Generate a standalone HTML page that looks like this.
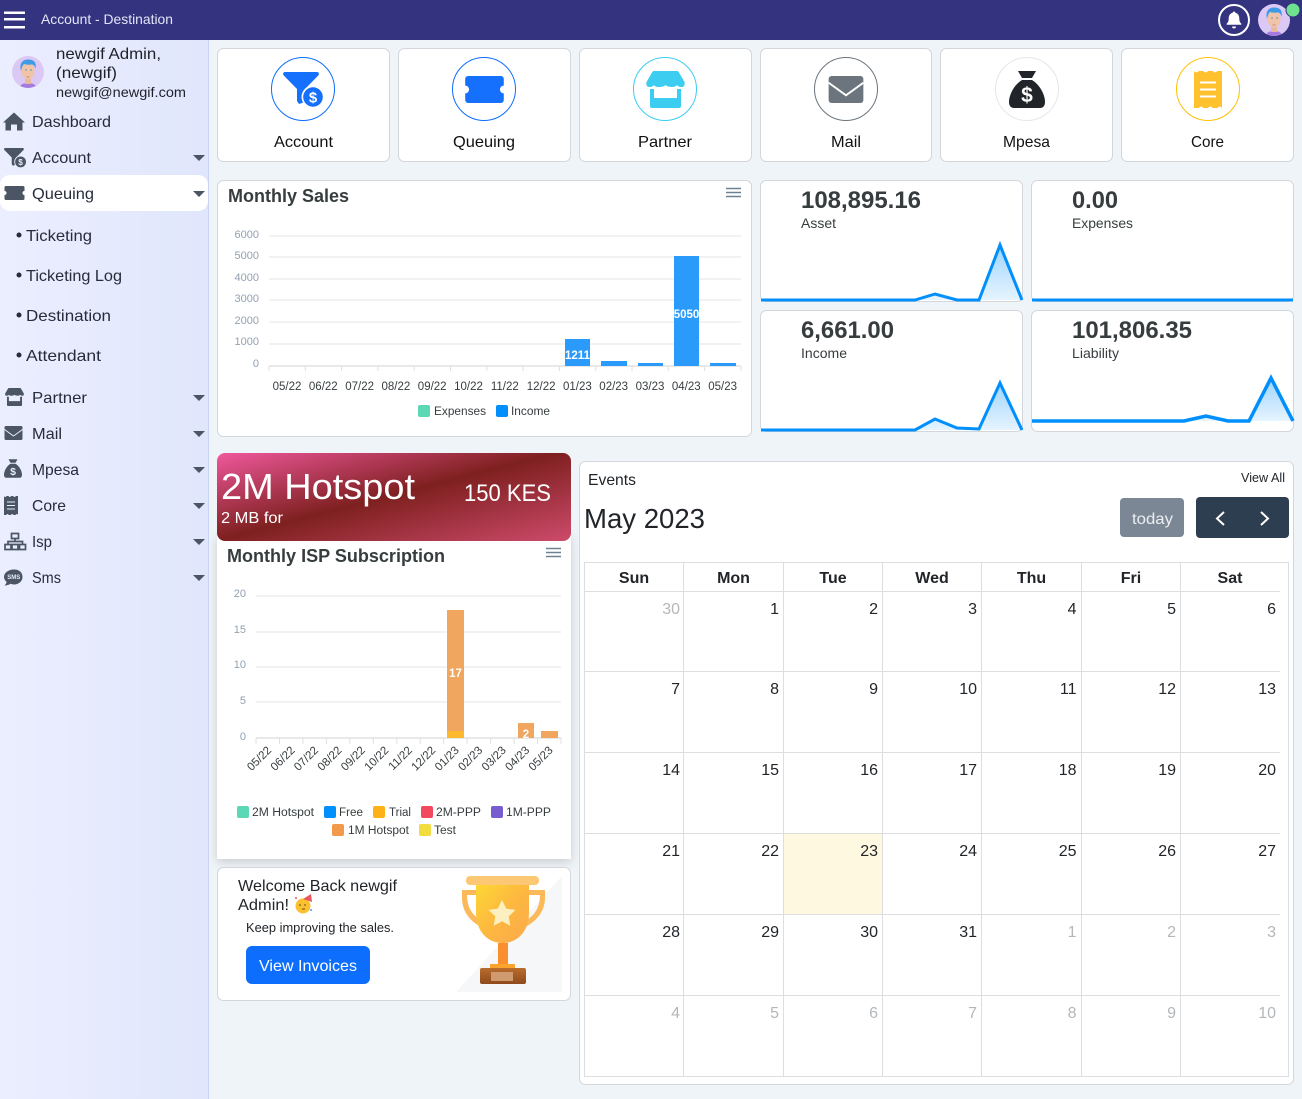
<!DOCTYPE html>
<html><head><meta charset="utf-8"><title>Account - Destination</title>
<style>
html,body{margin:0;padding:0;background:#eff4f8;overflow:hidden}
svg{display:block;font-family:"Liberation Sans",sans-serif}
.s{font-size:16px;fill:#262c3a}
.n{font-size:16px;fill:#212529;text-anchor:end}
.g{font-size:16px;fill:#b4b7ba;text-anchor:end}
.h{font-size:16px;fill:#212529;font-weight:bold;text-anchor:middle}
.x{font-size:11.5px;fill:#373d3f;text-anchor:middle}
.y{font-size:11px;fill:#93a1b0;text-anchor:end}
.r{font-size:11.5px;fill:#373d3f;text-anchor:end}
.l{font-size:11.5px;fill:#373d3f}
.t{font-size:18px;font-weight:bold;fill:#373d3f}
.v{font-size:24px;font-weight:bold;fill:#373d3f}
.c{font-size:14px;fill:#373d3f}
.q{font-size:16px;fill:#111}
.card{fill:#fff;stroke:#d3d6da}
</style></head><body>
<svg width="1302" height="1099" viewBox="0 0 1302 1099" xmlns="http://www.w3.org/2000/svg">
<defs>
<linearGradient id="side" x1="0" y1="0" x2="1" y2="0"><stop offset="0" stop-color="#ebeefe"/><stop offset="1" stop-color="#e0e6fc"/></linearGradient>
<linearGradient id="hot" gradientUnits="userSpaceOnUse" x1="217" y1="453" x2="260" y2="620"><stop offset="0" stop-color="#f0589c"/><stop offset=".49" stop-color="#7e201f"/><stop offset="1" stop-color="#cc4a6a"/></linearGradient>
<linearGradient id="sp" x1="0" y1="0" x2="0" y2="1"><stop offset="0" stop-color="#008ffb" stop-opacity=".38"/><stop offset="1" stop-color="#008ffb" stop-opacity=".1"/></linearGradient>
<linearGradient id="cup" x1="0" y1="0" x2="1" y2="1"><stop offset="0" stop-color="#fdd835"/><stop offset=".5" stop-color="#fdb840"/><stop offset="1" stop-color="#fba94c"/></linearGradient>
<linearGradient id="base" x1="0" y1="0" x2="0" y2="1"><stop offset="0" stop-color="#b96c2e"/><stop offset="1" stop-color="#8f4a1c"/></linearGradient>
<symbol id="funnel" viewBox="0 0 38 36" overflow="visible"><path d="M2 0H34a2 2 0 0 1 1.500 3.300L22 17V30l-6 2-2-3V17L.5 3.300A2 2 0 0 1 2 0z" fill="currentColor"/><circle cx="30" cy="25" r="11.500" fill="var(--bg)"/><circle cx="30" cy="25" r="9.800" fill="currentColor"/><text x="30" y="30.500" font-size="15" font-weight="bold" text-anchor="middle" fill="var(--bg)">$</text></symbol>
<symbol id="ticket" viewBox="0 0 40 28"><path d="M3 0H37a3 3 0 0 1 3 3V10a4 4 0 0 0 0 8V25a3 3 0 0 1-3 3H3a3 3 0 0 1-3-3V18a4 4 0 0 0 0-8V3a3 3 0 0 1 3-3z" fill="currentColor"/></symbol>
<symbol id="store" viewBox="0 0 39 37"><path d="M8 0H31a2 2 0 0 1 1.700 1L38.500 11c.8 2.500-.5 5-2.500 5-2.500 0-4-.5-5-2-1 1.500-3 2-5 2s-5-.5-6.500-2C18 15.500 16 16 13 16s-4-.5-5-2c-1 1.500-2.500 2-5 2-2 0-3.300-2.500-2.500-5L6.300 1A2 2 0 0 1 8 0z" fill="currentColor"/><path d="M4 18h4v9h23v-9h4v17a2 2 0 0 1-2 2H6a2 2 0 0 1-2-2z" fill="currentColor"/></symbol>
<symbol id="mail" viewBox="0 0 36 28"><rect width="36" height="28" rx="3" fill="currentColor"/><path d="M0 7L18 20 36 7" fill="none" stroke="var(--bg)" stroke-width="2"/></symbol>
<symbol id="bag" viewBox="0 0 36 37"><path d="M9 0H27L23 7H13z" fill="currentColor"/><path d="M13 9h10c7 4 13 14 13 22 0 4-2 6-5 6H5c-3 0-5-2-5-6C0 23 6 13 13 9z" fill="currentColor"/><text x="18" y="31" font-size="21" font-weight="bold" text-anchor="middle" fill="var(--bg)">$</text></symbol>
<symbol id="rec" viewBox="0 0 28 37"><path d="M0 0q2.330 3 4.670 0t4.670 0 4.670 0 4.670 0 4.670 0 4.650 0V37q-2.330-3-4.670 0t-4.670 0-4.670 0-4.670 0-4.670 0-4.650 0z" fill="currentColor"/><path d="M6 11.500H22M6 18.500H22M6 25.500H22" stroke="var(--bg)" stroke-width="2"/></symbol>
<symbol id="av" viewBox="0 0 32 32"><clipPath id="avc"><circle cx="16" cy="16" r="16"/></clipPath><g clip-path="url(#avc)"><rect width="32" height="32" fill="#dcc8f4"/><path d="M8 32c0-4 4-5 8-5s8 1 8 5z" fill="#a57be0"/><rect x="13" y="20" width="6" height="8" fill="#e6b9a0"/><ellipse cx="16" cy="15" rx="6.500" ry="8.500" fill="#f0c4a8"/><path d="M9 15C7 7 11 3.500 16 3.500s9 2 7.500 9.500c-.5-3-2-4.500-4-4.500-3 .5-6 0-7.500-.5-1.500 1.500-2.500 4-3 7z" fill="#3e9be6"/><path d="M13 14h2M18 14h2" stroke="#6a8fb0" stroke-width="1"/><path d="M14.500 21h3" stroke="#c98d78" stroke-width="1"/></g></symbol>
</defs>

<rect width="1302" height="1099" fill="#eff4f8"/>

<!-- sidebar -->
<rect x="0" y="40" width="208" height="1059" fill="url(#side)"/>
<rect x="208" y="40" width="1" height="1059" fill="#c9d3f6"/>
<rect x="0" y="175" width="208" height="36" rx="10" fill="#fff"/>
<use href="#av" x="12" y="56" width="32" height="32"/>
<text x="56" y="59" class="s" style="fill:#1d2129" textLength="105" lengthAdjust="spacingAndGlyphs">newgif Admin,</text>
<text x="56" y="78" class="s" style="fill:#1d2129" textLength="61" lengthAdjust="spacingAndGlyphs">(newgif)</text>
<text x="56" y="97" class="s" style="font-size:14px;fill:#1d2129" textLength="130" lengthAdjust="spacingAndGlyphs">newgif@newgif.com</text>

<g style="color:#4b5563;--bg:#e8ecfd">
<path d="M14 112.500L25 122.500H22.500V130.500H17V124.500H11V130.500H5.500V122.500H3z" fill="currentColor"/>
<use href="#funnel" x="4" y="148" width="21" height="20"/>
<use href="#ticket" x="4" y="186" width="21" height="14"/>
<use href="#store" x="5" y="388" width="19" height="18"/>
<use href="#mail" x="4" y="426" width="19" height="14"/>
<use href="#bag" x="4" y="459" width="18" height="19"/>
<use href="#rec" x="4" y="496" width="14" height="19"/>
<path d="M11.500 533.500h7v5h-7zM5 544.500h6v5H5zM12 544.500h6v5h-6zM19.500 544.500h6v5h-6zM15 538.500V541.500M8 544.500V541.500H22.500V544.500" fill="none" stroke="currentColor" stroke-width="1.700"/>
<path d="M14 569.500c6 0 8.500 3.500 8.500 7.500s-3.500 7.500-8.500 7.500c-1.500 0-2.500-.3-3.500-.7-1.500 1.200-3.500 1.700-6 1.700 1.200-1 2-2.300 2-3.700-1.500-1.300-2.500-3-2.500-4.800 0-4 4-7.500 10-7.500z" fill="currentColor"/>
<text x="13.700" y="579" font-size="6" font-weight="bold" text-anchor="middle" fill="#e8ecfd">SMS</text>
<path d="M193 155h12l-6 6zM193 191h12l-6 6zM193 395h12l-6 6zM193 431h12l-6 6zM193 467h12l-6 6zM193 503h12l-6 6zM193 539h12l-6 6zM193 575h12l-6 6z" fill="#4b5563"/>
</g>
<text x="32" y="127" class="s" textLength="79" lengthAdjust="spacingAndGlyphs">Dashboard</text>
<text x="32" y="163" class="s" textLength="59" lengthAdjust="spacingAndGlyphs">Account</text>
<text x="32" y="199" class="s" textLength="62" lengthAdjust="spacingAndGlyphs">Queuing</text>
<circle cx="19" cy="235" r="2.500" fill="#262c3a"/><text x="26" y="241" class="s" textLength="66" lengthAdjust="spacingAndGlyphs">Ticketing</text>
<circle cx="19" cy="275" r="2.500" fill="#262c3a"/><text x="26" y="281" class="s" textLength="96" lengthAdjust="spacingAndGlyphs">Ticketing Log</text>
<circle cx="19" cy="315" r="2.500" fill="#262c3a"/><text x="26" y="321" class="s" textLength="85" lengthAdjust="spacingAndGlyphs">Destination</text>
<circle cx="19" cy="355" r="2.500" fill="#262c3a"/><text x="26" y="361" class="s" textLength="75" lengthAdjust="spacingAndGlyphs">Attendant</text>
<text x="32" y="403" class="s" textLength="55" lengthAdjust="spacingAndGlyphs">Partner</text>
<text x="32" y="439" class="s" textLength="30" lengthAdjust="spacingAndGlyphs">Mail</text>
<text x="32" y="475" class="s" textLength="47" lengthAdjust="spacingAndGlyphs">Mpesa</text>
<text x="32" y="511" class="s" textLength="34" lengthAdjust="spacingAndGlyphs">Core</text>
<text x="32" y="547" class="s" textLength="20" lengthAdjust="spacingAndGlyphs">Isp</text>
<text x="32" y="583" class="s" textLength="29" lengthAdjust="spacingAndGlyphs">Sms</text>

<!-- header -->
<rect width="1302" height="40" fill="#333380"/>
<path d="M4 11.500H25V14H4zM4 18H25V20.500H4zM4 26H25V28.500H4z" fill="#fff"/>
<text x="41" y="24" font-size="14" fill="#e3e6f6" textLength="132" lengthAdjust="spacingAndGlyphs">Account - Destination</text>
<circle cx="1234" cy="20" r="15" fill="none" stroke="#fff" stroke-width="2"/>
<path d="M1234 11.500c.8 0 1.300.5 1.300 1.300 2.700.6 4 2.900 4 5.700 0 3 1 4.200 2 5.200v1h-14.600v-1c1-1 2-2.200 2-5.200 0-2.800 1.300-5.100 4-5.700 0-.8.500-1.300 1.300-1.300zM1232 26.500h4c0 1.300-.9 2-2 2s-2-.7-2-2z" fill="#fff"/>
<use href="#av" x="1258" y="4" width="32" height="32"/>
<circle cx="1293" cy="10" r="7" fill="#6ee28e" stroke="#333380" stroke-width="1"/>

<!-- top cards -->
<g>
<rect class="card" x="217.500" y="48.500" width="172" height="113" rx="6"/>
<rect class="card" x="398.500" y="48.500" width="172" height="113" rx="6"/>
<rect class="card" x="579.500" y="48.500" width="172" height="113" rx="6"/>
<rect class="card" x="760.500" y="48.500" width="171" height="113" rx="6"/>
<rect class="card" x="940.500" y="48.500" width="172" height="113" rx="6"/>
<rect class="card" x="1121.500" y="48.500" width="172" height="113" rx="6"/>
</g>
<g fill="#fff" stroke-width="1">
<circle cx="303" cy="89" r="31.500" stroke="#0d6efd"/>
<circle cx="484" cy="89" r="31.500" stroke="#0d6efd"/>
<circle cx="665" cy="89" r="31.500" stroke="#3ccdf0"/>
<circle cx="846" cy="89" r="31.500" stroke="#6c757d"/>
<circle cx="1027" cy="89" r="31.500" stroke="#e4e6e8"/>
<circle cx="1208" cy="89" r="31.500" stroke="#ffc107"/>
</g>
<g style="--bg:#fff">
<use href="#funnel" x="283" y="72" width="38" height="36" style="color:#1570fd"/>
<use href="#ticket" x="464" y="76" width="41" height="27" style="color:#1570fd"/>
<use href="#store" x="646" y="71" width="39" height="37" style="color:#3ccdf0"/>
<use href="#mail" x="828" y="76" width="36" height="27" style="color:#6c757d"/>
<use href="#bag" x="1009" y="71" width="36" height="37" style="color:#212529"/>
<use href="#rec" x="1194" y="71" width="28" height="37" style="color:#ffc12e"/>
</g>
<text x="274" y="147" class="q" textLength="59" lengthAdjust="spacingAndGlyphs">Account</text>
<text x="453" y="147" class="q" textLength="62" lengthAdjust="spacingAndGlyphs">Queuing</text>
<text x="638" y="147" class="q" textLength="54" lengthAdjust="spacingAndGlyphs">Partner</text>
<text x="831" y="147" class="q" textLength="30" lengthAdjust="spacingAndGlyphs">Mail</text>
<text x="1003" y="147" class="q" textLength="47" lengthAdjust="spacingAndGlyphs">Mpesa</text>
<text x="1191" y="147" class="q" textLength="33" lengthAdjust="spacingAndGlyphs">Core</text>

<!-- Monthly sales -->
<rect class="card" x="217.500" y="180.500" width="534" height="256" rx="6"/>
<text x="228" y="202" class="t" textLength="121" lengthAdjust="spacingAndGlyphs">Monthly Sales</text>
<path d="M726 188.500H741M726 192.500H741M726 196.500H741" stroke="#6e8192" stroke-width="1.500"/>
<path d="M269 236H741M269 257H741M269 279H741M269 300H741M269 322H741M269 344H741" stroke="#e6e6e6" stroke-width="1"/>
<path d="M269 366H741" stroke="#e0e0e0" stroke-width="1.500"/>
<path d="M269 366v5M305.300 366v5M341.600 366v5M377.900 366v5M414.200 366v5M450.500 366v5M486.800 366v5M523.100 366v5M559.400 366v5M595.700 366v5M632 366v5M668.300 366v5M704.600 366v5M741 366v5" stroke="#e0e0e0"/>
<g fill="#2a9bfb">
<rect x="565" y="339" width="25" height="27"/>
<rect x="601" y="361" width="26" height="5"/>
<rect x="638" y="363" width="25" height="3"/>
<rect x="674" y="256" width="25" height="110"/>
<rect x="710" y="363" width="26" height="3"/>
</g>
<text x="577.500" y="359" font-size="11.500" font-weight="bold" fill="#fff" text-anchor="middle">1211</text>
<text x="686.500" y="318" font-size="11.500" font-weight="bold" fill="#fff" text-anchor="middle">5050</text>
<text x="259" y="238" class="y">6000</text><text x="259" y="259" class="y">5000</text><text x="259" y="281" class="y">4000</text><text x="259" y="302" class="y">3000</text><text x="259" y="324" class="y">2000</text><text x="259" y="345" class="y">1000</text><text x="259" y="367" class="y">0</text>
<text x="287" y="390" class="x">05/22</text><text x="323.300" y="390" class="x">06/22</text><text x="359.600" y="390" class="x">07/22</text><text x="395.900" y="390" class="x">08/22</text><text x="432.200" y="390" class="x">09/22</text><text x="468.500" y="390" class="x">10/22</text><text x="504.800" y="390" class="x">11/22</text><text x="541.100" y="390" class="x">12/22</text><text x="577.400" y="390" class="x">01/23</text><text x="613.700" y="390" class="x">02/23</text><text x="650" y="390" class="x">03/23</text><text x="686.300" y="390" class="x">04/23</text><text x="722.600" y="390" class="x">05/23</text>
<rect x="418" y="405" width="12" height="12" rx="2" fill="#5bd8b5"/><text x="434" y="415" class="l" textLength="52" lengthAdjust="spacingAndGlyphs">Expenses</text>
<rect x="496" y="405" width="12" height="12" rx="2" fill="#008ffb"/><text x="511" y="415" class="l" textLength="39" lengthAdjust="spacingAndGlyphs">Income</text>

<!-- stat cards -->
<rect class="card" x="760.500" y="180.500" width="262" height="121" rx="6"/>
<rect class="card" x="1031.500" y="180.500" width="262" height="121" rx="6"/>
<rect class="card" x="760.500" y="310.500" width="262" height="121" rx="6"/>
<rect class="card" x="1031.500" y="310.500" width="262" height="121" rx="6"/>
<text x="801" y="208" class="v" textLength="120" lengthAdjust="spacingAndGlyphs">108,895.16</text><text x="801" y="228" class="c" textLength="35" lengthAdjust="spacingAndGlyphs">Asset</text>
<text x="1072" y="208" class="v" textLength="46" lengthAdjust="spacingAndGlyphs">0.00</text><text x="1072" y="228" class="c" textLength="61" lengthAdjust="spacingAndGlyphs">Expenses</text>
<text x="801" y="338" class="v" textLength="93" lengthAdjust="spacingAndGlyphs">6,661.00</text><text x="801" y="358" class="c" textLength="46" lengthAdjust="spacingAndGlyphs">Income</text>
<text x="1072" y="338" class="v" textLength="120" lengthAdjust="spacingAndGlyphs">101,806.35</text><text x="1072" y="358" class="c" textLength="47" lengthAdjust="spacingAndGlyphs">Liability</text>
<path d="M761 300H915L935 294 957 300H979L1000 245 1022 300z" fill="url(#sp)"/>
<path d="M761 300H915L935 294 957 300H979L1000 245 1022 300" fill="none" stroke="#008ffb" stroke-width="3"/>
<path d="M1032 300H1293" fill="none" stroke="#008ffb" stroke-width="3"/>
<path d="M761 430H915L935 419 957 428 979 429 1000 383 1022 430z" fill="url(#sp)"/>
<path d="M761 430H915L935 419 957 428 979 429 1000 383 1022 430" fill="none" stroke="#008ffb" stroke-width="3"/>
<path d="M1032 421H1184L1206 416 1228 421H1249L1271 378 1293 421z" fill="url(#sp)"/>
<path d="M1032 421H1184L1206 416 1228 421H1249L1271 378 1293 421" fill="none" stroke="#008ffb" stroke-width="3.500"/>

<!-- ISP card -->
<rect x="217" y="535" width="354" height="324" fill="#fff" style="filter:drop-shadow(0 3px 5px rgba(0,0,0,.16))"/>
<rect x="217" y="453" width="354" height="88" rx="8" fill="url(#hot)"/>
<text x="221" y="499" font-size="36" fill="#fff" textLength="194" lengthAdjust="spacingAndGlyphs">2M Hotspot</text>
<text x="464" y="501" font-size="24" fill="#fff" textLength="87" lengthAdjust="spacingAndGlyphs">150 KES</text>
<text x="221" y="523" font-size="16" fill="#fff" textLength="62" lengthAdjust="spacingAndGlyphs">2 MB for</text>
<text x="227" y="562" class="t" textLength="218" lengthAdjust="spacingAndGlyphs">Monthly ISP Subscription</text>
<path d="M546 548.500H561M546 552.500H561M546 556.500H561" stroke="#6e8192" stroke-width="1.500"/>
<path d="M256 596H561M256 632H561M256 667H561M256 702H561" stroke="#e6e6e6"/>
<path d="M256 738H561" stroke="#e0e0e0" stroke-width="1.500"/>
<path d="M256 738v6M279.500 738v6M302.900 738v6M326.400 738v6M349.800 738v6M373.300 738v6M396.800 738v6M420.200 738v6M443.700 738v6M467.100 738v6M490.600 738v6M514.100 738v6M537.500 738v6M561 738v6" stroke="#e0e0e0"/>
<rect x="447" y="610" width="17" height="121" fill="#f1a65f"/>
<rect x="447" y="731" width="17" height="7" fill="#fdb92e"/>
<rect x="518" y="723" width="16" height="15" fill="#f1a65f"/>
<rect x="541" y="731" width="17" height="7" fill="#f1a65f"/>
<text x="455.500" y="677" font-size="11.500" font-weight="bold" fill="#fff" text-anchor="middle">17</text>
<text x="526" y="738" font-size="11.500" font-weight="bold" fill="#fff" text-anchor="middle">2</text>
<text x="246" y="597" class="y">20</text><text x="246" y="633" class="y">15</text><text x="246" y="668" class="y">10</text><text x="246" y="704" class="y">5</text><text x="246" y="740" class="y">0</text>
<text class="r" transform="translate(272 751) rotate(-45)">05/22</text>
<text class="r" transform="translate(295.500 751) rotate(-45)">06/22</text>
<text class="r" transform="translate(318.900 751) rotate(-45)">07/22</text>
<text class="r" transform="translate(342.400 751) rotate(-45)">08/22</text>
<text class="r" transform="translate(365.800 751) rotate(-45)">09/22</text>
<text class="r" transform="translate(389.300 751) rotate(-45)">10/22</text>
<text class="r" transform="translate(412.800 751) rotate(-45)">11/22</text>
<text class="r" transform="translate(436.200 751) rotate(-45)">12/22</text>
<text class="r" transform="translate(459.700 751) rotate(-45)">01/23</text>
<text class="r" transform="translate(483.100 751) rotate(-45)">02/23</text>
<text class="r" transform="translate(506.600 751) rotate(-45)">03/23</text>
<text class="r" transform="translate(530.100 751) rotate(-45)">04/23</text>
<text class="r" transform="translate(553.500 751) rotate(-45)">05/23</text>
<rect x="237" y="806" width="12" height="12" rx="2" fill="#5bd8b5"/><text x="252" y="816" class="l" textLength="62" lengthAdjust="spacingAndGlyphs">2M Hotspot</text>
<rect x="324" y="806" width="12" height="12" rx="2" fill="#008ffb"/><text x="339" y="816" class="l" textLength="24" lengthAdjust="spacingAndGlyphs">Free</text>
<rect x="373" y="806" width="12" height="12" rx="2" fill="#feb019"/><text x="389" y="816" class="l" textLength="22" lengthAdjust="spacingAndGlyphs">Trial</text>
<rect x="421" y="806" width="12" height="12" rx="2" fill="#f2495f"/><text x="436" y="816" class="l" textLength="45" lengthAdjust="spacingAndGlyphs">2M-PPP</text>
<rect x="491" y="806" width="12" height="12" rx="2" fill="#775dd0"/><text x="506" y="816" class="l" textLength="45" lengthAdjust="spacingAndGlyphs">1M-PPP</text>
<rect x="332" y="824" width="12" height="12" rx="2" fill="#f2994a"/><text x="348" y="834" class="l" textLength="61" lengthAdjust="spacingAndGlyphs">1M Hotspot</text>
<rect x="419" y="824" width="12" height="12" rx="2" fill="#f2dc40"/><text x="434" y="834" class="l" textLength="22" lengthAdjust="spacingAndGlyphs">Test</text>

<!-- welcome -->
<rect class="card" x="217.500" y="867.500" width="353" height="133" rx="6"/>
<text x="238" y="891" class="q" style="fill:#212529" textLength="159" lengthAdjust="spacingAndGlyphs">Welcome Back newgif</text>
<text x="238" y="910" class="q" style="fill:#212529" textLength="51" lengthAdjust="spacingAndGlyphs">Admin!</text>
<circle cx="303" cy="906" r="7.500" fill="#fbc02d"/><path d="M303 899l8-5 1 8z" fill="#e9575f"/><path d="M299 905h2M304 905h2M302 909h3" stroke="#6b4a1a" stroke-width="1"/><circle cx="296" cy="898" r="1" fill="#e9575f"/><circle cx="311" cy="910" r="1" fill="#4aa3e0"/>
<text x="246" y="932" font-size="13" fill="#212529" textLength="148" lengthAdjust="spacingAndGlyphs">Keep improving the sales.</text>
<rect x="246" y="946" width="124" height="38" rx="6" fill="#0d6efd"/>
<text x="259" y="971" font-size="16" fill="#fff" textLength="98" lengthAdjust="spacingAndGlyphs">View Invoices</text>
<path d="M456 992L562 876V992z" fill="#f6f7f8"/>
<path d="M476 890H462V898C462 912 471 923 484 928L485 923C476 918 467 911 467 895H476zM529 890H545V898C545 912 535 923 523 928L522 923C531 918 540 911 540 895H529z" fill="#fbb95a"/>
<path d="M476 884H529V912C529 932 517 943 502.500 943S476 932 476 912z" fill="url(#cup)"/>
<rect x="466" y="876" width="73" height="9" rx="4" fill="#fdc873"/>
<rect x="498" y="943" width="10" height="22" fill="#f98f2e"/>
<rect x="490" y="964" width="25" height="5" rx="1" fill="#fba32c"/>
<rect x="480" y="968" width="46" height="16" rx="2" fill="url(#base)"/>
<rect x="491" y="972" width="22" height="9" fill="#cf9a6e"/>
<path d="M502 900l4.200 8.600 9.300 1.300-6.800 6.500 1.600 9.300-8.300-4.400-8.300 4.400 1.600-9.300-6.800-6.500 9.300-1.300z" fill="#fdf0c0"/>

<!-- calendar -->
<rect class="card" x="579.500" y="461.500" width="714" height="623" rx="6"/>
<text x="588" y="485" class="q" style="fill:#212529" textLength="48" lengthAdjust="spacingAndGlyphs">Events</text>
<text x="1241" y="482" font-size="12.500" fill="#212529" textLength="44" lengthAdjust="spacingAndGlyphs">View All</text>
<text x="584" y="528" font-size="28" fill="#212529" textLength="121" lengthAdjust="spacingAndGlyphs">May 2023</text>
<rect x="1120" y="498" width="64" height="39" rx="4" fill="#7b8794"/>
<text x="1132" y="524" font-size="16" fill="#eceef0" textLength="41" lengthAdjust="spacingAndGlyphs">today</text>
<rect x="1196" y="497" width="93" height="41" rx="4" fill="#2c3e50"/>
<path d="M1224 512l-7 6.500 7 6.500M1261 512l7 6.500-7 6.500" fill="none" stroke="#fff" stroke-width="2"/>
<rect x="784" y="834" width="98" height="80" fill="#fff8e1"/>
<path d="M584 562.500H1289M584 591.500H1280M584 671.500H1280M584 752.500H1280M584 833.500H1280M584 914.500H1280M584 995.500H1280M584 1076.500H1289" stroke="#dcdee0" fill="none"/>
<path d="M584.500 562V1076M683.500 562V1076M783.500 562V1076M882.500 562V1076M981.500 562V1076M1081.500 562V1076M1180.500 562V1076M1288.500 562V1076" stroke="#dcdee0" fill="none"/>
<text x="634" y="583" class="h">Sun</text><text x="733.500" y="583" class="h">Mon</text><text x="833" y="583" class="h">Tue</text><text x="932" y="583" class="h">Wed</text><text x="1031.500" y="583" class="h">Thu</text><text x="1131" y="583" class="h">Fri</text><text x="1230" y="583" class="h">Sat</text>
<text x="680" y="614" class="g">30</text><text x="779" y="614" class="n">1</text><text x="878" y="614" class="n">2</text><text x="977" y="614" class="n">3</text><text x="1076.500" y="614" class="n">4</text><text x="1176" y="614" class="n">5</text><text x="1276" y="614" class="n">6</text>
<text x="680" y="694" class="n">7</text><text x="779" y="694" class="n">8</text><text x="878" y="694" class="n">9</text><text x="977" y="694" class="n">10</text><text x="1076.500" y="694" class="n">11</text><text x="1176" y="694" class="n">12</text><text x="1276" y="694" class="n">13</text>
<text x="680" y="775" class="n">14</text><text x="779" y="775" class="n">15</text><text x="878" y="775" class="n">16</text><text x="977" y="775" class="n">17</text><text x="1076.500" y="775" class="n">18</text><text x="1176" y="775" class="n">19</text><text x="1276" y="775" class="n">20</text>
<text x="680" y="856" class="n">21</text><text x="779" y="856" class="n">22</text><text x="878" y="856" class="n">23</text><text x="977" y="856" class="n">24</text><text x="1076.500" y="856" class="n">25</text><text x="1176" y="856" class="n">26</text><text x="1276" y="856" class="n">27</text>
<text x="680" y="937" class="n">28</text><text x="779" y="937" class="n">29</text><text x="878" y="937" class="n">30</text><text x="977" y="937" class="n">31</text><text x="1076.500" y="937" class="g">1</text><text x="1176" y="937" class="g">2</text><text x="1276" y="937" class="g">3</text>
<text x="680" y="1018" class="g">4</text><text x="779" y="1018" class="g">5</text><text x="878" y="1018" class="g">6</text><text x="977" y="1018" class="g">7</text><text x="1076.500" y="1018" class="g">8</text><text x="1176" y="1018" class="g">9</text><text x="1276" y="1018" class="g">10</text>
</svg>
</body></html>
